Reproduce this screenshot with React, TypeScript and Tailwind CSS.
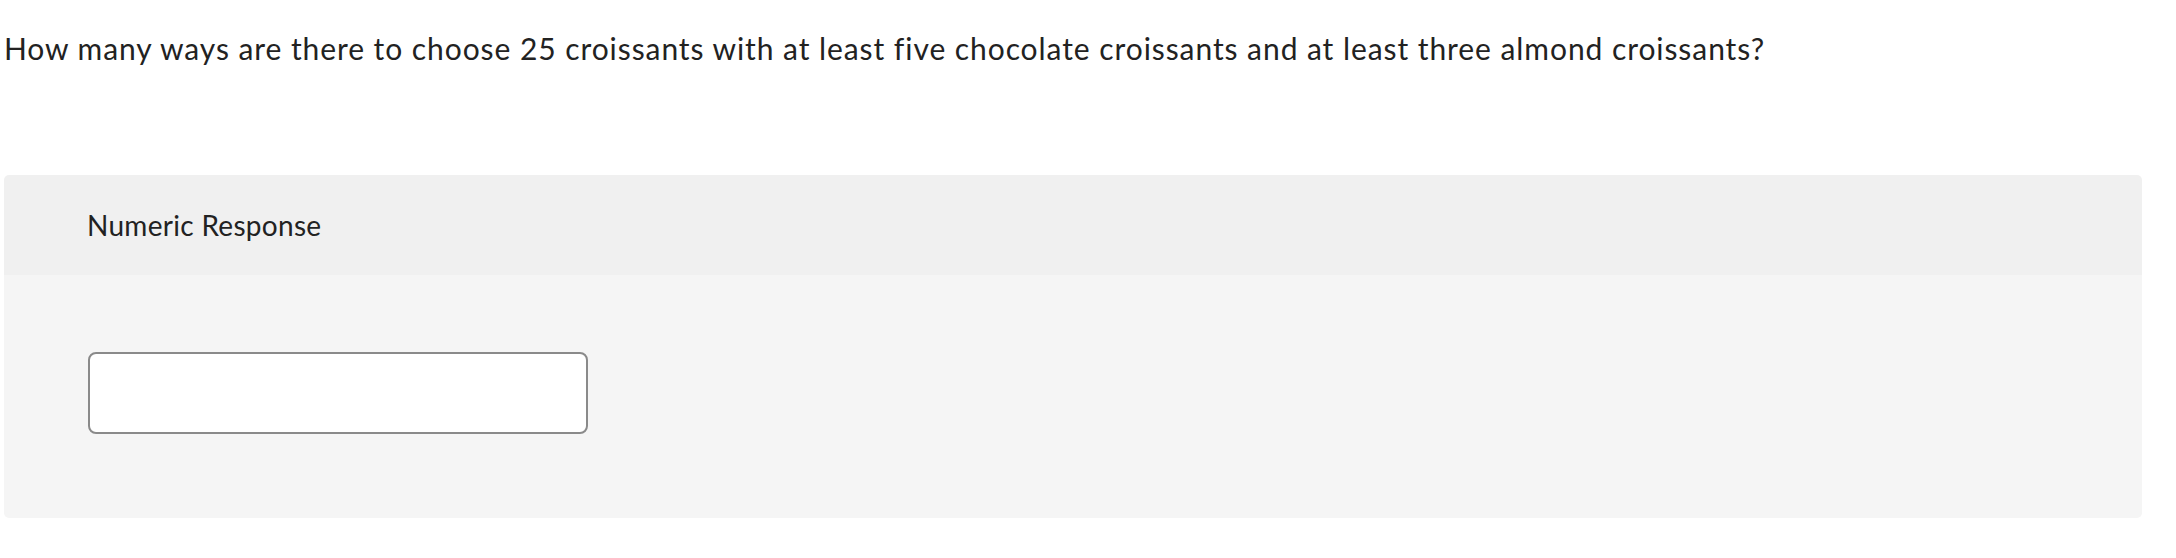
import React from 'react';

export default function App() {
    return (
        <div className="w-full min-h-screen bg-white pl-[4px] pr-[34px] pt-[28px] text-[#222222]" style={{ fontFamily: 'Lato, "Open Sans", sans-serif' }}>
            <p className="text-[30px] leading-[40px] tracking-[0.93px] m-0">
                How many ways are there to choose 25 croissants with at least five chocolate croissants and at least three almond croissants?
            </p>

            <div className="mt-[107px] rounded-[5px] overflow-hidden">
                <div className="h-[100px] bg-[#f0f0f0] flex items-center pl-[83px]">
                    <span className="text-[28px] leading-none tracking-[0.3px]">Numeric Response</span>
                </div>
                <div className="h-[243px] bg-[#f5f5f5] pl-[84px] pt-[77px]">
                    <input
                        type="text"
                        className="w-[500px] h-[82px] bg-white border-2 border-[#8a8a8a] rounded-[8px] outline-none px-3 text-[28px]"
                    />
                </div>
            </div>
        </div>
    );
}
